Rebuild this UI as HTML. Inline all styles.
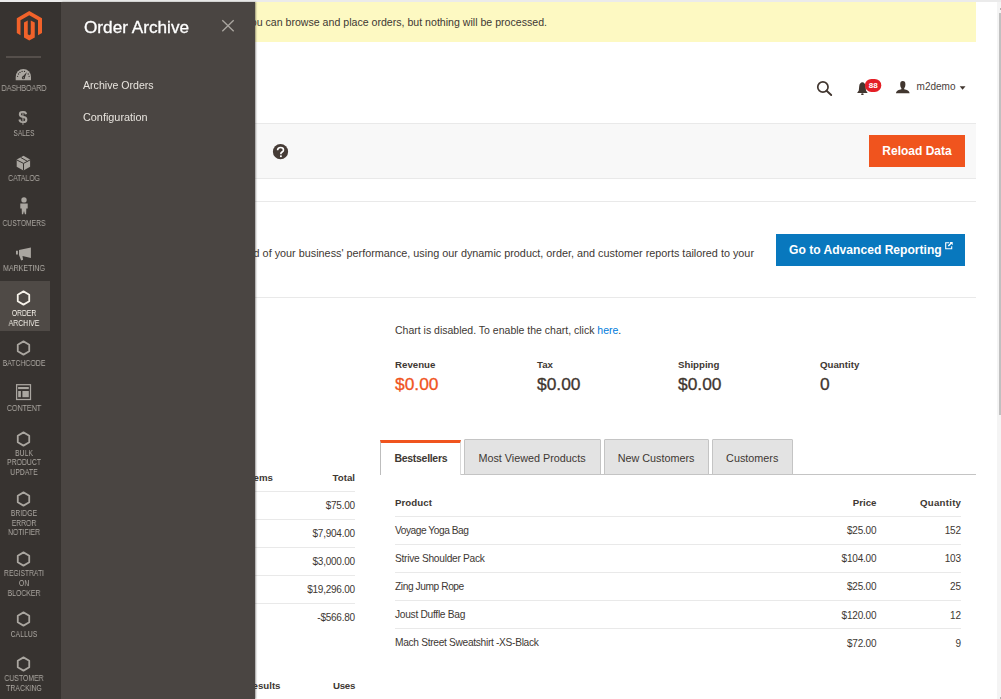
<!DOCTYPE html>
<html><head><meta charset="utf-8"><style>
html,body{margin:0;padding:0;}
body{width:1001px;height:699px;overflow:hidden;position:relative;background:#fff;font-family:"Liberation Sans", sans-serif;}
.t{position:absolute;white-space:nowrap;}
.r{position:absolute;}
</style></head><body>
<div class="r" style="left:0px;top:0px;width:1001px;height:2px;background:#ebebeb;"></div>
<div class="r" style="left:61px;top:2px;width:915px;height:40px;background:#fdf9c2;"></div>
<div class="t" style="top:16.73px;font-size:10.6px;line-height:10.6px;font-weight:400;color:#403833;right:454px;text-align:right;">This is a demo store. You can browse and place orders, but nothing will be processed.</div>
<svg class="r" style="left:815px;top:80px" width="20" height="18" viewBox="815 80 20 18">
<circle cx="822.9" cy="87" r="5.15" fill="none" stroke="#41362f" stroke-width="1.7"/>
<line x1="826.6" y1="90.7" x2="831.2" y2="95" stroke="#41362f" stroke-width="1.9" stroke-linecap="round"/></svg>
<svg class="r" style="left:854px;top:76px" width="30" height="22" viewBox="854 76 30 22">
<path d="M857.1 93 L858.8 90.6 L859.2 86.2 C859.4 83.9 860.7 82.5 862.4 82.3 C864.1 82.5 865.4 83.9 865.6 86.2 L866 90.6 L867.7 93 Z" fill="#41362f"/>
<ellipse cx="862.4" cy="94.2" rx="1.3" ry="0.9" fill="#41362f"/>
<rect x="864.9" y="78.9" width="16.4" height="13.1" rx="6.55" fill="#e41f26"/>
</svg>
<div class="t" style="top:82.03px;font-size:8px;line-height:8px;font-weight:700;color:#fff;left:723.2px;width:300px;text-align:center;">88</div>
<svg class="r" style="left:894px;top:80px" width="18" height="15" viewBox="894 80 18 15">
<path d="M902.8 81.1 C904.6 81.1 905.4 82.3 905.4 84.2 C905.4 86 904.9 87.4 904.2 88.3 L904.2 89.2 C906.6 89.8 909.6 90.6 909.6 93.3 L896 93.3 C896 90.6 899 89.8 901.4 89.2 L901.4 88.3 C900.7 87.4 900.2 86 900.2 84.2 C900.2 82.3 901 81.1 902.8 81.1 Z" fill="#41362f"/>
</svg>
<div class="t" style="top:82.23px;font-size:10px;line-height:10px;font-weight:400;color:#4a403a;left:916.6px;">m2demo</div>
<svg class="r" style="left:959px;top:85px" width="8" height="6" viewBox="959 85 8 6"><path d="M959.7 86.2 L965.5 86.2 L962.6 89.8 Z" fill="#41362f"/></svg>
<div class="r" style="left:61px;top:123px;width:915px;height:56px;background:#f8f8f8;border-top:1px solid #e9e9e9;border-bottom:1px solid #e9e9e9;box-sizing:border-box;"></div>
<svg class="r" style="left:272px;top:143px" width="18" height="18" viewBox="272 143 18 18">
<circle cx="280.5" cy="151.7" r="7.6" fill="#463c36"/>
<path d="M277.6 150.2 C277.6 148.4 278.9 147.5 280.6 147.5 C282.4 147.5 283.5 148.5 283.5 149.9 C283.5 151.9 280.9 152 280.9 153.6 L280.9 154.3" fill="none" stroke="#fff" stroke-width="1.6"/>
<rect x="280" y="155.4" width="1.8" height="1.7" fill="#fff"/></svg>
<div class="r" style="left:869px;top:135px;width:96px;height:32px;background:#f0541e;"></div>
<div class="t" style="top:145.04px;font-size:12px;line-height:12px;font-weight:700;color:#fff;left:767px;width:300px;text-align:center;">Reload Data</div>
<div class="r" style="left:61px;top:201px;width:915px;height:1px;background:#e9e9e9;"></div>
<div class="t" style="top:247.83px;font-size:10.83px;line-height:10.83px;font-weight:400;color:#403833;right:247px;text-align:right;">Gain new insights and take command of your business&#39; performance, using our dynamic product, order, and customer reports tailored to your</div>
<div class="r" style="left:776px;top:233.5px;width:189px;height:32.5px;background:#0878be;"></div>
<div class="t" style="top:243.76px;font-size:12.1px;line-height:12.1px;font-weight:700;color:#fff;left:789px;">Go to Advanced Reporting</div>
<svg class="r" style="left:944px;top:241px" width="10" height="10" viewBox="944 241 10 10">
<path d="M949 242.7 L945.7 242.7 L945.7 248.7 L951.7 248.7 L951.7 246.2" fill="none" stroke="#fff" stroke-width="1.1"/>
<path d="M948.3 246 L951.3 243" fill="none" stroke="#fff" stroke-width="1.4"/>
<path d="M949.4 241.9 L952.7 241.9 L952.7 245.2 Z" fill="#fff"/></svg>
<div class="r" style="left:61px;top:297px;width:915px;height:1px;background:#e9e9e9;"></div>
<div class="t" style="top:325.41px;font-size:10.5px;line-height:10.5px;font-weight:400;color:#403833;left:395px;">Chart is disabled. To enable the chart, click <span style="color:#007bdb">here</span>.</div>
<div class="t" style="top:360.29px;font-size:9.7px;line-height:9.7px;font-weight:700;color:#403833;left:395px;">Revenue</div>
<div class="t" style="top:360.29px;font-size:9.7px;line-height:9.7px;font-weight:700;color:#403833;left:537px;">Tax</div>
<div class="t" style="top:360.29px;font-size:9.7px;line-height:9.7px;font-weight:700;color:#403833;left:678px;">Shipping</div>
<div class="t" style="top:360.29px;font-size:9.7px;line-height:9.7px;font-weight:700;color:#403833;left:820px;">Quantity</div>
<div class="t" style="top:375.57px;font-size:17.4px;line-height:17.4px;font-weight:400;color:#f0541e;left:395px;-webkit-text-stroke:0.3px #f0541e;">$0.00</div>
<div class="t" style="top:375.57px;font-size:17.4px;line-height:17.4px;font-weight:400;color:#41362f;left:537px;-webkit-text-stroke:0.3px #41362f;">$0.00</div>
<div class="t" style="top:375.57px;font-size:17.4px;line-height:17.4px;font-weight:400;color:#41362f;left:678px;-webkit-text-stroke:0.3px #41362f;">$0.00</div>
<div class="t" style="top:375.57px;font-size:17.4px;line-height:17.4px;font-weight:400;color:#41362f;left:820px;-webkit-text-stroke:0.3px #41362f;">0</div>
<div class="t" style="top:472.89px;font-size:9.7px;line-height:9.7px;font-weight:700;color:#403833;right:728px;text-align:right;">Items</div>
<div class="t" style="top:472.89px;font-size:9.7px;line-height:9.7px;font-weight:700;color:#403833;right:646px;text-align:right;">Total</div>
<div class="r" style="left:61px;top:491px;width:294px;height:1px;background:#e9e9e9;"></div>
<div class="r" style="left:61px;top:519px;width:294px;height:1px;background:#e9e9e9;"></div>
<div class="r" style="left:61px;top:547px;width:294px;height:1px;background:#e9e9e9;"></div>
<div class="r" style="left:61px;top:575px;width:294px;height:1px;background:#e9e9e9;"></div>
<div class="r" style="left:61px;top:603px;width:294px;height:1px;background:#e9e9e9;"></div>
<div class="t" style="top:500.94px;font-size:10px;line-height:10px;font-weight:400;color:#403833;letter-spacing:-0.25px;right:646.2px;text-align:right;">$75.00</div>
<div class="t" style="top:528.93px;font-size:10px;line-height:10px;font-weight:400;color:#403833;letter-spacing:-0.25px;right:646.2px;text-align:right;">$7,904.00</div>
<div class="t" style="top:556.93px;font-size:10px;line-height:10px;font-weight:400;color:#403833;letter-spacing:-0.25px;right:646.2px;text-align:right;">$3,000.00</div>
<div class="t" style="top:584.93px;font-size:10px;line-height:10px;font-weight:400;color:#403833;letter-spacing:-0.25px;right:646.2px;text-align:right;">$19,296.00</div>
<div class="t" style="top:613.03px;font-size:10px;line-height:10px;font-weight:400;color:#403833;letter-spacing:-0.25px;right:646.2px;text-align:right;">-$566.80</div>
<div class="t" style="top:681.09px;font-size:9.7px;line-height:9.7px;font-weight:700;color:#403833;right:720.5px;text-align:right;">Results</div>
<div class="t" style="top:681.09px;font-size:9.7px;line-height:9.7px;font-weight:700;color:#403833;letter-spacing:-0.3px;right:646px;text-align:right;">Uses</div>
<div class="r" style="left:380px;top:474px;width:596px;height:1px;background:#c4c4c4;"></div>
<div class="r" style="left:380px;top:439.5px;width:81px;height:35.5px;background:#fff;border-left:1px solid #bdbdbd;border-right:1px solid #dadada;border-top:3px solid #f0541e;box-sizing:border-box;"></div>
<div class="t" style="top:453.11px;font-size:10.5px;line-height:10.5px;font-weight:700;color:#403833;letter-spacing:-0.3px;left:394.5px;">Bestsellers</div>
<div class="r" style="left:464px;top:439px;width:137px;height:36px;background:#e3e3e3;border:1px solid #c4c4c4;border-radius:1px 1px 0 0;box-sizing:border-box;"></div>
<div class="t" style="top:452.86px;font-size:10.8px;line-height:10.8px;font-weight:400;color:#403833;left:478.4px;">Most Viewed Products</div>
<div class="r" style="left:604px;top:439px;width:105px;height:36px;background:#e3e3e3;border:1px solid #c4c4c4;border-radius:1px 1px 0 0;box-sizing:border-box;"></div>
<div class="t" style="top:452.86px;font-size:10.8px;line-height:10.8px;font-weight:400;color:#403833;left:617.7px;">New Customers</div>
<div class="r" style="left:712px;top:439px;width:81px;height:36px;background:#e3e3e3;border:1px solid #c4c4c4;border-radius:1px 1px 0 0;box-sizing:border-box;"></div>
<div class="t" style="top:452.86px;font-size:10.8px;line-height:10.8px;font-weight:400;color:#403833;left:726.1px;">Customers</div>
<div class="t" style="top:498.19px;font-size:9.7px;line-height:9.7px;font-weight:700;color:#403833;letter-spacing:0.05px;left:395px;">Product</div>
<div class="t" style="top:498.19px;font-size:9.7px;line-height:9.7px;font-weight:700;color:#403833;right:124.5px;text-align:right;">Price</div>
<div class="t" style="top:498.19px;font-size:9.7px;line-height:9.7px;font-weight:700;color:#403833;letter-spacing:0.24px;right:39.75999999999999px;text-align:right;">Quantity</div>
<div class="r" style="left:395px;top:516px;width:566px;height:1px;background:#e9e9e9;"></div>
<div class="t" style="top:525.87px;font-size:10.2px;line-height:10.2px;font-weight:400;color:#403833;letter-spacing:-0.47px;left:395px;">Voyage Yoga Bag</div>
<div class="t" style="top:526.03px;font-size:10px;line-height:10px;font-weight:400;color:#403833;letter-spacing:-0.2px;right:124.70000000000005px;text-align:right;">$25.00</div>
<div class="t" style="top:526.03px;font-size:10px;line-height:10px;font-weight:400;color:#403833;letter-spacing:-0.2px;right:40.200000000000045px;text-align:right;">152</div>
<div class="r" style="left:395px;top:544px;width:566px;height:1px;background:#e9e9e9;"></div>
<div class="t" style="top:554.07px;font-size:10.2px;line-height:10.2px;font-weight:400;color:#403833;letter-spacing:-0.275px;left:395px;">Strive Shoulder Pack</div>
<div class="t" style="top:554.24px;font-size:10px;line-height:10px;font-weight:400;color:#403833;letter-spacing:-0.2px;right:124.70000000000005px;text-align:right;">$104.00</div>
<div class="t" style="top:554.24px;font-size:10px;line-height:10px;font-weight:400;color:#403833;letter-spacing:-0.2px;right:40.200000000000045px;text-align:right;">103</div>
<div class="r" style="left:395px;top:572px;width:566px;height:1px;background:#e9e9e9;"></div>
<div class="t" style="top:582.27px;font-size:10.2px;line-height:10.2px;font-weight:400;color:#403833;letter-spacing:-0.42px;left:395px;">Zing Jump Rope</div>
<div class="t" style="top:582.43px;font-size:10px;line-height:10px;font-weight:400;color:#403833;letter-spacing:-0.2px;right:124.70000000000005px;text-align:right;">$25.00</div>
<div class="t" style="top:582.43px;font-size:10px;line-height:10px;font-weight:400;color:#403833;letter-spacing:-0.2px;right:40.200000000000045px;text-align:right;">25</div>
<div class="r" style="left:395px;top:600px;width:566px;height:1px;background:#e9e9e9;"></div>
<div class="t" style="top:610.47px;font-size:10.2px;line-height:10.2px;font-weight:400;color:#403833;letter-spacing:-0.28px;left:395px;">Joust Duffle Bag</div>
<div class="t" style="top:610.63px;font-size:10px;line-height:10px;font-weight:400;color:#403833;letter-spacing:-0.2px;right:124.70000000000005px;text-align:right;">$120.00</div>
<div class="t" style="top:610.63px;font-size:10px;line-height:10px;font-weight:400;color:#403833;letter-spacing:-0.2px;right:40.200000000000045px;text-align:right;">12</div>
<div class="r" style="left:395px;top:628px;width:566px;height:1px;background:#e9e9e9;"></div>
<div class="t" style="top:638.37px;font-size:10.2px;line-height:10.2px;font-weight:400;color:#403833;letter-spacing:-0.31px;left:395px;">Mach Street Sweatshirt -XS-Black</div>
<div class="t" style="top:638.53px;font-size:10px;line-height:10px;font-weight:400;color:#403833;letter-spacing:-0.2px;right:124.70000000000005px;text-align:right;">$72.00</div>
<div class="t" style="top:638.53px;font-size:10px;line-height:10px;font-weight:400;color:#403833;letter-spacing:-0.2px;right:40.200000000000045px;text-align:right;">9</div>
<div class="r" style="left:997px;top:2px;width:4px;height:697px;background:#f4f4f4;"></div>
<div class="r" style="left:998.6px;top:13px;width:2.4px;height:401.6px;background:#c0c0c0;"></div>
<div class="r" style="left:999.6px;top:8px;width:1.4px;height:2px;background:#b0b0b0;"></div>
<div class="r" style="left:999.8px;top:697px;width:1.2px;height:2px;background:#b0b0b0;"></div>
<div class="r" style="left:0px;top:2px;width:61px;height:697px;background:#373330;"></div>
<svg class="r" style="left:12px;top:8px" width="34" height="35" viewBox="12 8 34 35">
<path d="M29.25 11 L42 18.25 L42 33 L38 35.25 L38 20.25 L29.25 15.25 L20.5 20.25 L20.5 35.25 L16.8 33 L16.8 18.25 Z" fill="#f1622a"/>
<path d="M24 22.5 L27.75 20.5 L27.75 34.25 L29.25 35.25 L30.75 34.25 L30.75 20.5 L34.75 22.5 L34.75 37.5 L29.25 40.5 L24 37.5 Z" fill="#f1622a"/>
</svg>
<div class="r" style="left:6px;top:56.3px;width:35px;height:1.5px;background:#554f4b;"></div>
<div class="r" style="left:0px;top:281px;width:50px;height:50px;background:#4f4a46;"></div>
<div class="t" style="top:84.10px;font-size:8.5px;line-height:8.5px;font-weight:400;color:#aca8a2;left:-126.5px;width:300px;text-align:center;transform:scaleX(0.835435294117647);transform-origin:50% 0;will-change:transform;">DASHBOARD</div>
<div class="t" style="top:128.90px;font-size:8.5px;line-height:8.5px;font-weight:400;color:#aca8a2;left:-126.5px;width:300px;text-align:center;transform:scaleX(0.7621176470588235);transform-origin:50% 0;will-change:transform;">SALES</div>
<div class="t" style="top:174.10px;font-size:8.5px;line-height:8.5px;font-weight:400;color:#aca8a2;left:-126.5px;width:300px;text-align:center;transform:scaleX(0.8084235294117645);transform-origin:50% 0;will-change:transform;">CATALOG</div>
<div class="t" style="top:219.10px;font-size:8.5px;line-height:8.5px;font-weight:400;color:#aca8a2;left:-126.5px;width:300px;text-align:center;transform:scaleX(0.7939529411764704);transform-origin:50% 0;will-change:transform;">CUSTOMERS</div>
<div class="t" style="top:264.10px;font-size:8.5px;line-height:8.5px;font-weight:400;color:#aca8a2;left:-126.5px;width:300px;text-align:center;transform:scaleX(0.8267529411764705);transform-origin:50% 0;will-change:transform;">MARKETING</div>
<div class="t" style="top:359.10px;font-size:8.5px;line-height:8.5px;font-weight:400;color:#aca8a2;left:-126.5px;width:300px;text-align:center;transform:scaleX(0.8142117647058822);transform-origin:50% 0;will-change:transform;">BATCHCODE</div>
<div class="t" style="top:404.00px;font-size:8.5px;line-height:8.5px;font-weight:400;color:#aca8a2;left:-126.5px;width:300px;text-align:center;transform:scaleX(0.834470588235294);transform-origin:50% 0;will-change:transform;">CONTENT</div>
<div class="t" style="top:448.80px;font-size:8.5px;line-height:8.5px;font-weight:400;color:#aca8a2;left:-126.5px;width:300px;text-align:center;transform:scaleX(0.8103529411764705);transform-origin:50% 0;will-change:transform;">BULK</div>
<div class="t" style="top:458.40px;font-size:8.5px;line-height:8.5px;font-weight:400;color:#aca8a2;left:-126.5px;width:300px;text-align:center;transform:scaleX(0.8103529411764705);transform-origin:50% 0;will-change:transform;">PRODUCT</div>
<div class="t" style="top:468.00px;font-size:8.5px;line-height:8.5px;font-weight:400;color:#aca8a2;left:-126.5px;width:300px;text-align:center;transform:scaleX(0.8103529411764705);transform-origin:50% 0;will-change:transform;">UPDATE</div>
<div class="t" style="top:509.10px;font-size:8.5px;line-height:8.5px;font-weight:400;color:#aca8a2;left:-126.5px;width:300px;text-align:center;transform:scaleX(0.8103529411764705);transform-origin:50% 0;will-change:transform;">BRIDGE</div>
<div class="t" style="top:518.70px;font-size:8.5px;line-height:8.5px;font-weight:400;color:#aca8a2;left:-126.5px;width:300px;text-align:center;transform:scaleX(0.8103529411764705);transform-origin:50% 0;will-change:transform;">ERROR</div>
<div class="t" style="top:528.30px;font-size:8.5px;line-height:8.5px;font-weight:400;color:#aca8a2;left:-126.5px;width:300px;text-align:center;transform:scaleX(0.8103529411764705);transform-origin:50% 0;will-change:transform;">NOTIFIER</div>
<div class="t" style="top:569.30px;font-size:8.5px;line-height:8.5px;font-weight:400;color:#aca8a2;left:-126.5px;width:300px;text-align:center;transform:scaleX(0.7900941176470587);transform-origin:50% 0;will-change:transform;">REGISTRATI</div>
<div class="t" style="top:578.90px;font-size:8.5px;line-height:8.5px;font-weight:400;color:#aca8a2;left:-126.5px;width:300px;text-align:center;transform:scaleX(0.8103529411764705);transform-origin:50% 0;will-change:transform;">ON</div>
<div class="t" style="top:588.50px;font-size:8.5px;line-height:8.5px;font-weight:400;color:#aca8a2;left:-126.5px;width:300px;text-align:center;transform:scaleX(0.8103529411764705);transform-origin:50% 0;will-change:transform;">BLOCKER</div>
<div class="t" style="top:629.50px;font-size:8.5px;line-height:8.5px;font-weight:400;color:#aca8a2;left:-126.5px;width:300px;text-align:center;transform:scaleX(0.8103529411764705);transform-origin:50% 0;will-change:transform;">CALLUS</div>
<div class="t" style="top:674.30px;font-size:8.5px;line-height:8.5px;font-weight:400;color:#aca8a2;left:-126.5px;width:300px;text-align:center;transform:scaleX(0.8103529411764705);transform-origin:50% 0;will-change:transform;">CUSTOMER</div>
<div class="t" style="top:683.90px;font-size:8.5px;line-height:8.5px;font-weight:400;color:#aca8a2;left:-126.5px;width:300px;text-align:center;transform:scaleX(0.8103529411764705);transform-origin:50% 0;will-change:transform;">TRACKING</div>
<div class="t" style="top:309.30px;font-size:8.5px;line-height:8.5px;font-weight:400;color:#f7f3eb;left:-126.5px;width:300px;text-align:center;transform:scaleX(0.8045647058823528);transform-origin:50% 0;will-change:transform;">ORDER</div>
<div class="t" style="top:318.90px;font-size:8.5px;line-height:8.5px;font-weight:400;color:#f7f3eb;left:-126.5px;width:300px;text-align:center;transform:scaleX(0.8093882352941176);transform-origin:50% 0;will-change:transform;">ARCHIVE</div>
<svg class="r" style="left:0;top:0" width="61" height="699" viewBox="0 0 61 699">
<path d="M15.7 80.2 L15.7 77 A7.65 8 0 0 1 31 77 L31 80.2 Z" fill="#aaa6a0"/>
<path d="M22 77.2 L26.9 72 L24.6 78.3 Z" fill="#373330"/>
<circle cx="23.4" cy="77.7" r="1.55" fill="#373330"/><circle cx="23.4" cy="77.7" r="0.5" fill="#aaa6a0"/>
<g fill="#373330"><circle cx="17.6" cy="76.3" r="0.65"/><circle cx="18.5" cy="74" r="0.65"/><circle cx="20" cy="72.4" r="0.65"/><circle cx="22.1" cy="71.4" r="0.65"/><circle cx="24.5" cy="71.4" r="0.65"/><circle cx="28.2" cy="74" r="0.65"/><circle cx="29.1" cy="76.3" r="0.65"/></g>
<path d="M23.5 155.8 L30.1 159.4 L30.1 166.8 L23.5 170.5 L16.7 166.8 L16.7 159.4 Z" fill="#aaa6a0"/>
<path d="M16.5 159.8 L23.5 163.4 L30.3 159.8 M23.5 163.4 L23.5 170.6 M20.6 157.4 L27.3 161.3" fill="none" stroke="#373330" stroke-width="1"/>
<circle cx="24" cy="199.9" r="2.7" fill="#aaa6a0"/>
<path d="M20.3 203.4 L27.7 203.4 L27.7 208.6 L26.3 208.6 L26.1 214.2 L24.9 214.2 L24 211 L23.1 214.2 L21.9 214.2 L21.7 208.6 L20.3 208.6 Z" fill="#aaa6a0"/>
<path d="M16 250.7 L17.9 250.7 L17.9 254.6 L16 254.6 Z" fill="#aaa6a0"/>
<path d="M19 250.1 L30.9 247.6 L30.9 258 L22.5 256 L23.1 259.7 L21.2 260.5 L19 255 Z" fill="#aaa6a0"/>
<rect x="16.6" y="384.7" width="13.9" height="14.8" fill="none" stroke="#aaa6a0" stroke-width="1.25"/>
<rect x="18.1" y="387" width="10.7" height="2.1" fill="#aaa6a0"/>
<rect x="18.2" y="391" width="2.7" height="6.2" fill="#aaa6a0"/>
<rect x="22.4" y="391" width="6.4" height="6.2" fill="#aaa6a0"/>
</svg>
<svg class="r" style="left:0;top:338.35px" width="61" height="20" viewBox="0 338.35 61 20"><polygon points="23.50,341.73 29.23,345.04 29.23,351.66 23.50,354.97 17.77,351.66 17.77,345.04" fill="none" stroke="#aaa6a0" stroke-width="1.8" stroke-linejoin="round"/></svg>
<svg class="r" style="left:0;top:428.5px" width="61" height="20" viewBox="0 428.5 61 20"><polygon points="23.50,431.88 29.23,435.19 29.23,441.81 23.50,445.12 17.77,441.81 17.77,435.19" fill="none" stroke="#aaa6a0" stroke-width="1.8" stroke-linejoin="round"/></svg>
<svg class="r" style="left:0;top:488.6px" width="61" height="20" viewBox="0 488.6 61 20"><polygon points="23.50,491.98 29.23,495.29 29.23,501.91 23.50,505.22 17.77,501.91 17.77,495.29" fill="none" stroke="#aaa6a0" stroke-width="1.8" stroke-linejoin="round"/></svg>
<svg class="r" style="left:0;top:548.75px" width="61" height="20" viewBox="0 548.75 61 20"><polygon points="23.50,552.13 29.23,555.44 29.23,562.06 23.50,565.37 17.77,562.06 17.77,555.44" fill="none" stroke="#aaa6a0" stroke-width="1.8" stroke-linejoin="round"/></svg>
<svg class="r" style="left:0;top:608.75px" width="61" height="20" viewBox="0 608.75 61 20"><polygon points="23.50,612.13 29.23,615.44 29.23,622.06 23.50,625.37 17.77,622.06 17.77,615.44" fill="none" stroke="#aaa6a0" stroke-width="1.8" stroke-linejoin="round"/></svg>
<svg class="r" style="left:0;top:653.95px" width="61" height="20" viewBox="0 653.95 61 20"><polygon points="23.50,657.33 29.23,660.64 29.23,667.26 23.50,670.57 17.77,667.26 17.77,660.64" fill="none" stroke="#aaa6a0" stroke-width="1.8" stroke-linejoin="round"/></svg>
<svg class="r" style="left:0;top:288.3px" width="61" height="20" viewBox="0 288.3 61 20"><polygon points="23.50,291.68 29.23,294.99 29.23,301.61 23.50,304.92 17.77,301.61 17.77,294.99" fill="none" stroke="#f7f3eb" stroke-width="1.8" stroke-linejoin="round"/></svg>
<div class="t" style="top:110.08px;font-size:16.8px;line-height:16.8px;font-weight:700;color:#aaa6a0;left:-127.0px;width:300px;text-align:center;will-change:transform;">$</div>
<div class="r" style="left:61px;top:2px;width:194px;height:697px;background:#4a4542;box-shadow:1px 0 1.5px rgba(40,36,34,0.45);"></div>
<div class="t" style="top:18.64px;font-size:17.2px;line-height:17.2px;font-weight:400;color:#fff;left:83.5px;will-change:transform;-webkit-text-stroke:0.3px #fff;">Order Archive</div>
<svg class="r" style="left:220px;top:18px" width="16" height="16" viewBox="220 18 16 16">
<path d="M222.3 20.3 L233.7 31.2 M233.7 20.3 L222.3 31.2" stroke="#aaa6a0" stroke-width="1.35"/></svg>
<div class="t" style="top:79.83px;font-size:10.6px;line-height:10.6px;font-weight:400;color:#e8e4de;left:82.7px;will-change:transform;">Archive Orders</div>
<div class="t" style="top:111.62px;font-size:10.85px;line-height:10.85px;font-weight:400;color:#e8e4de;left:82.7px;will-change:transform;">Configuration</div>
</body></html>
